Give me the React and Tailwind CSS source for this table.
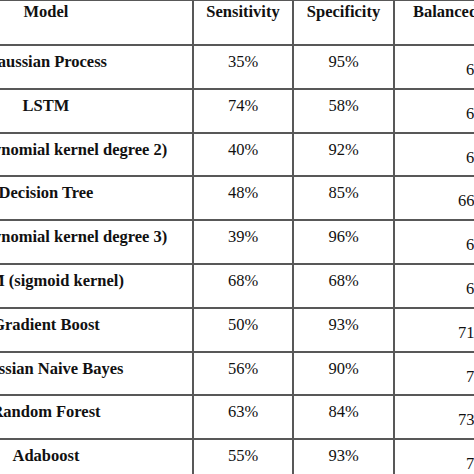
import React from 'react'

const rows = [
  { model: 'Gaussian Process', sens: '35%', spec: '95%', bal: '65.0%', wide: false },
  { model: 'LSTM', sens: '74%', spec: '58%', bal: '66.0%', wide: false },
  { model: 'SVM (polynomial kernel degree 2)', sens: '40%', spec: '92%', bal: '66.0%', wide: false },
  { model: 'Decision Tree', sens: '48%', spec: '85%', bal: '66.5%', wide: true },
  { model: 'SVM (polynomial kernel degree 3)', sens: '39%', spec: '96%', bal: '67.5%', wide: false },
  { model: 'SVM (sigmoid kernel)', sens: '68%', spec: '68%', bal: '68.0%', wide: false },
  { model: 'Gradient Boost', sens: '50%', spec: '93%', bal: '71.5%', wide: true },
  { model: 'Gaussian Naive Bayes', sens: '56%', spec: '90%', bal: '73.0%', wide: false },
  { model: 'Random Forest', sens: '63%', spec: '84%', bal: '73.5%', wide: true },
  { model: 'Adaboost', sens: '55%', spec: '93%', bal: '74.0%', wide: false },
]

const grid = 'grid grid-cols-[294px_100px_101px_160px]'
const line = 'border-[#585858]'

export default function App() {
  return (
    <div className="w-[474px] h-[474px] overflow-hidden bg-white text-[#111] font-['Liberation_Serif',serif] text-[16.5px] leading-[20px]">
      <div className={`-ml-[100px] -mt-px w-[655px] border-t-2 ${line}`}>
        <div className={`${grid} h-[45px] border-b-2 ${line} font-bold`}>
          <div className={`border-r-2 ${line} text-center pt-px`}>Model</div>
          <div className={`border-r-2 ${line} text-center pt-px`}>Sensitivity</div>
          <div className={`border-r-2 ${line} text-center pt-px`}>Specificity</div>
          <div className="pl-[18px] pt-px whitespace-nowrap">Balanced Accuracy</div>
        </div>
        {rows.map(r => (
          <div key={r.model} className={`${grid} h-[43.8px] border-b-2 ${line}`}>
            <div className={`border-r-2 ${line} text-center pt-[6px] font-bold whitespace-nowrap`}>{r.model}</div>
            <div className={`border-r-2 ${line} text-center pt-[6px]`}>{r.sens}</div>
            <div className={`border-r-2 ${line} text-center pt-[6px]`}>{r.spec}</div>
            <div className={`pt-[14px] whitespace-nowrap ${r.wide ? 'pl-[63px]' : 'pl-[71px]'}`}>{r.bal}</div>
          </div>
        ))}
      </div>
    </div>
  )
}
